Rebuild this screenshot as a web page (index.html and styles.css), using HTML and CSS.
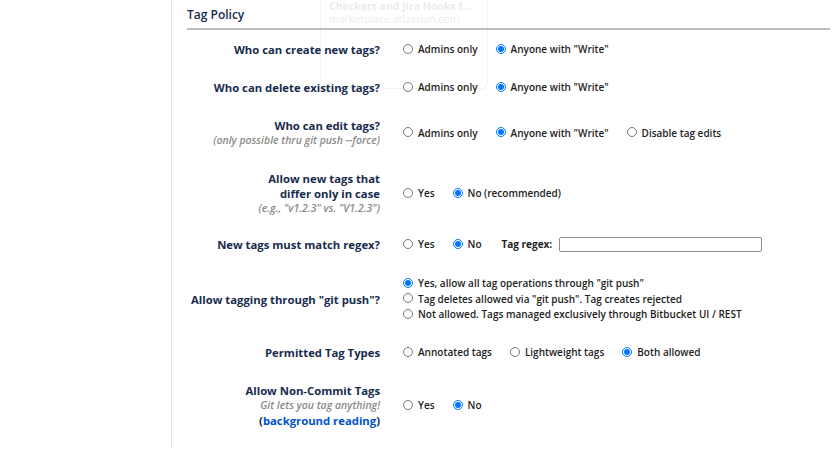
FILE: index.html
```html
<!DOCTYPE html>
<html lang="en">
<head>
  <meta charset="UTF-8">
  <title>Tag Policy</title>
  <link rel="stylesheet" href="styles.css">
</head>
<body>

  <div class="page">
    <div class="sidebar"></div>

    <div class="content">
      <div class="ghost">
        <div class="ghost-title">Checkers and Jira Hooks f...</div>
        <div class="ghost-url">marketplace.atlassian.com</div>
      </div>

      <h2 class="section-title">Tag Policy</h2>

      <div class="row">
        <div class="label">Who can create new tags?</div>
        <div class="options">
          <label class="opt"><input type="radio" name="create"> Admins only</label>
          <label class="opt"><input type="radio" name="create" checked> Anyone with "Write"</label>
        </div>
      </div>

      <div class="row">
        <div class="label">Who can delete existing tags?</div>
        <div class="options">
          <label class="opt"><input type="radio" name="delete"> Admins only</label>
          <label class="opt"><input type="radio" name="delete" checked> Anyone with "Write"</label>
        </div>
      </div>

      <div class="row">
        <div class="label">
          Who can edit tags?
          <span class="hint">(only possible thru git push --force)</span>
        </div>
        <div class="options">
          <label class="opt"><input type="radio" name="edit"> Admins only</label>
          <label class="opt"><input type="radio" name="edit" checked> Anyone with "Write"</label>
          <label class="opt"><input type="radio" name="edit"> Disable tag edits</label>
        </div>
      </div>

      <div class="row">
        <div class="label">
          Allow new tags that<br>
          differ only in case
          <span class="hint">(e.g., "v1.2.3" vs. "V1.2.3")</span>
        </div>
        <div class="options">
          <label class="opt"><input type="radio" name="case"> Yes</label>
          <label class="opt"><input type="radio" name="case" checked> No (recommended)</label>
        </div>
      </div>

      <div class="row row-tight">
        <div class="label">New tags must match regex?</div>
        <div class="options">
          <label class="opt"><input type="radio" name="regex"> Yes</label>
          <label class="opt"><input type="radio" name="regex" checked> No</label>
          <span class="regex-label">Tag regex:</span>
          <input type="text" class="regex-input">
        </div>
      </div>

      <div class="row">
        <div class="label">Allow tagging through "git push"?</div>
        <div class="options stacked">
          <label class="opt"><input type="radio" name="push" checked> Yes, allow all tag operations through "git push"</label>
          <label class="opt"><input type="radio" name="push"> Tag deletes allowed via "git push". Tag creates rejected</label>
          <label class="opt"><input type="radio" name="push"> Not allowed. Tags managed exclusively through Bitbucket UI / REST</label>
        </div>
      </div>

      <div class="row">
        <div class="label">Permitted Tag Types</div>
        <div class="options">
          <label class="opt"><input type="radio" name="types"> Annotated tags</label>
          <label class="opt"><input type="radio" name="types"> Lightweight tags</label>
          <label class="opt"><input type="radio" name="types" checked> Both allowed</label>
        </div>
      </div>

      <div class="row">
        <div class="label">
          Allow Non-Commit Tags
          <span class="hint">Git lets you tag anything!</span>
          <span class="more">(<a href="#" class="link">background reading</a>)</span>
        </div>
        <div class="options">
          <label class="opt"><input type="radio" name="noncommit"> Yes</label>
          <label class="opt"><input type="radio" name="noncommit" checked> No</label>
        </div>
      </div>
    </div>
  </div>

</body>
</html>
```

FILE: styles.css
```css
body {
  margin: 0;
  font-family: "Open Sans", "DejaVu Sans", sans-serif;
  font-size: 10.5px;
  color: #172b4d;
  background-color: #fff;
}
.page {
  display: flex;
  min-height: 450px;
}
.sidebar {
  width: 171px;
  border-right: 1px solid #e3e3e3;
  height: 448px;
  flex-shrink: 0;
}
.content {
  position: relative;
  width: 643px;
  padding-left: 15px;
}
.section-title {
  position: relative;
  z-index: 1;
  margin: 0;
  padding-top: 6px;
  height: 22px;
  font-size: 12px;
  font-weight: 600;
  color: #172b4d;
  border-bottom: 2px solid #bdbdbd;
}
.row {
  position: relative;
  z-index: 1;
  display: grid;
  grid-template-columns: 193px 1fr;
  column-gap: 23px;
  align-items: center;
  padding: 12px 0 11px;
}
.row-tight {
  padding: 10px 0 12px;
}
.label {
  text-align: right;
  font-size: 11.3px;
  font-weight: 700;
  line-height: 15px;
}
.hint {
  display: block;
  color: #8a8a8a;
  font-style: italic;
  font-weight: 600;
  font-size: 10.5px;
}
.more {
  display: block;
}
.link {
  color: #0052cc;
  text-decoration: none;
}
.options {
  display: flex;
  align-items: center;
  gap: 18px;
  color: #1d1d1d;
  font-size: 10px;
  font-weight: 600;
  line-height: 15px;
}
.options.stacked {
  flex-direction: column;
  align-items: flex-start;
  gap: 0.5px;
}
.opt {
  display: flex;
  align-items: center;
  white-space: nowrap;
}
.opt input {
  width: 10px;
  height: 10px;
  margin: 0 5px 2px 0;
}
.regex-label {
  font-weight: 700;
  margin-left: 2px;
}
.regex-input {
  width: 201px;
  height: 13px;
  margin-left: -11px;
  padding: 0;
  border: 1px solid #8f8f8f;
  border-radius: 2px;
}
.ghost {
  position: absolute;
  z-index: 0;
  left: 148px;
  top: 0;
  width: 150px;
  height: 88px;
  padding: 0 8px;
  border: 1px solid #f3f3f3;
  border-top: none;
  border-radius: 0 0 6px 6px;
  color: #ececec;
  line-height: 12px;
  font-size: 10.5px;
}
.ghost-title {
  font-weight: 700;
}
.ghost-url {
  line-height: 14px;
}
```
